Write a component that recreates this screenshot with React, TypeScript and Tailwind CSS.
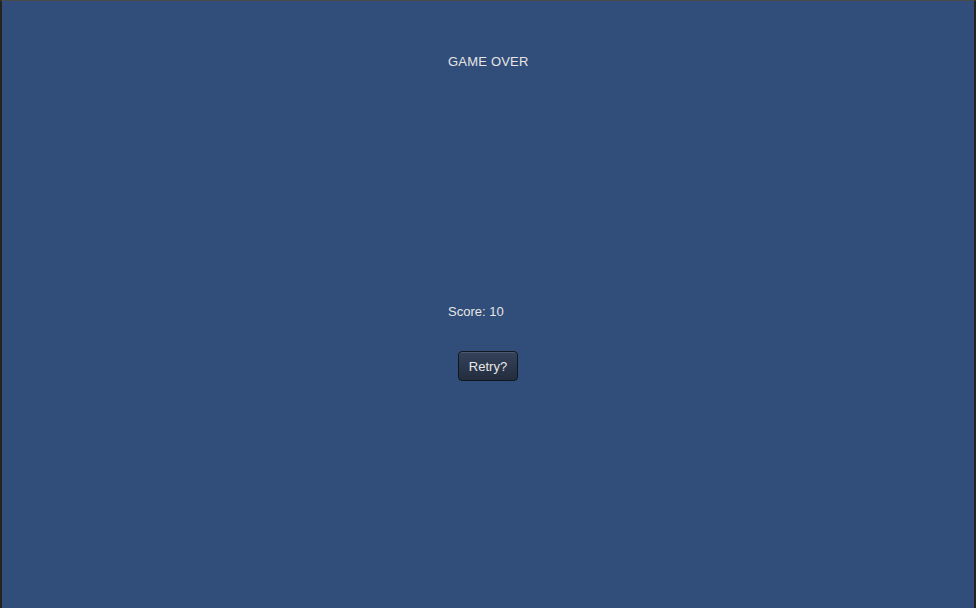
export default function App() {
  return (
    <div
      className="w-[976px] h-[608px] bg-[#314d79] border-t border-t-[#4a4a4a] border-l-2 border-l-[#232323] border-r-2 border-r-[#232323] flex flex-col text-[13px] leading-[15px] text-[#e6e6e6]"
      style={{ fontFamily: '"Liberation Sans", Arial, sans-serif' }}
    >
      <div className="pl-[446px] pt-[53px] tracking-[0.2px]">GAME OVER</div>
      <div className="pl-[446px] pt-[235px]">Score: 10</div>
      <div className="pl-[456px] pt-[32px] flex">
        <button className="w-[60px] h-[30px] rounded-[4px] border border-[#11161f] bg-gradient-to-b from-[#34425a] to-[#232d3e] text-[#e8e8e8] text-[13px] shadow-[inset_0_1px_0_rgba(255,255,255,0.12)]">
          Retry?
        </button>
      </div>
    </div>
  );
}
